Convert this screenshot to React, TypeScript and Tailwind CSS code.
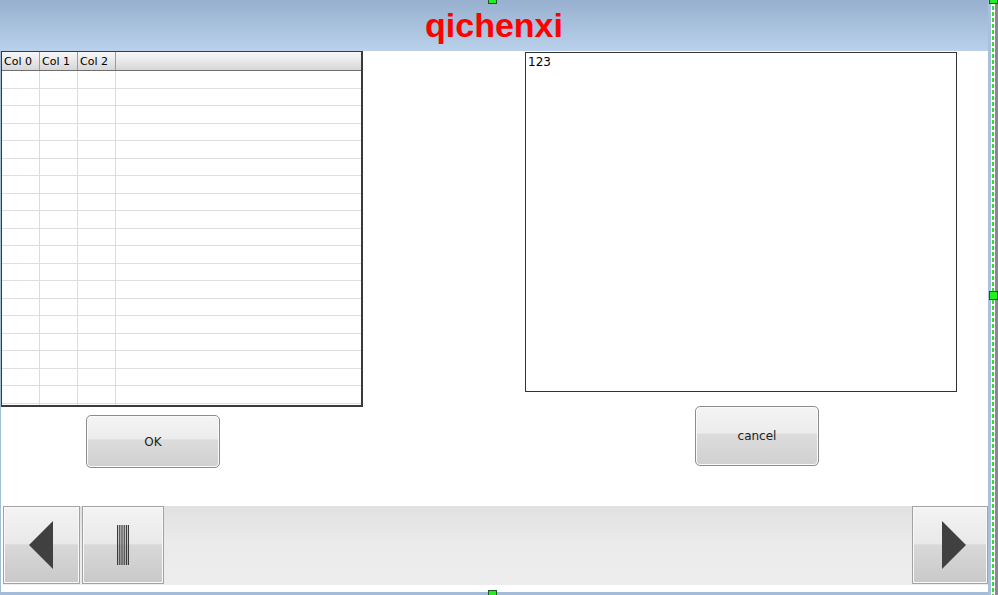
import React from 'react';

const columns = ['Col 0', 'Col 1', 'Col 2'] as const;
const rows = Array.from({ length: 20 }, (_, i) => i);

const uiFont = { fontFamily: '"DejaVu Sans", "Liberation Sans", sans-serif' };

function GridTable() {
  return (
    <div className="h-[356px] w-[362px] overflow-hidden border border-[#3a3a3a] border-r-2 border-b-2 bg-white">
      <div className="flex h-[19px] border-b border-[#6f6f6f] bg-[linear-gradient(to_bottom,#f7f7f7,#e8e8e8_50%,#d6d6d6)]">
        {columns.map((col) => (
          <div
            key={col}
            className="flex w-[38px] items-center border-r border-[#9c9c9c] pl-[2px] text-[11px] leading-none text-black"
            style={uiFont}
          >
            {col}
          </div>
        ))}
        <div className="flex-1" />
      </div>
      {rows.map((r) => (
        <div key={r} className="flex h-[17.5px] border-b border-[#dedede]">
          <div className="w-[38px] border-r border-[#dcdcdc]" />
          <div className="w-[38px] border-r border-[#dcdcdc]" />
          <div className="w-[38px] border-r border-[#dcdcdc]" />
          <div className="flex-1" />
        </div>
      ))}
    </div>
  );
}

function GlossButton({ label, className }: { label: string; className: string }) {
  return (
    <button
      type="button"
      className={`flex items-center justify-center rounded-[5px] border border-[#8c8c8c] bg-[linear-gradient(to_bottom,#f4f4f4,#ececec_45%,#dcdcdc_47%,#d0d0d0)] text-[12px] text-[#222] shadow-[inset_0_0_0_1px_#fafafa] ${className}`}
      style={uiFont}
    >
      {label}
    </button>
  );
}

function NavButton({ children, className }: { children: React.ReactNode; className: string }) {
  return (
    <div
      className={`flex items-center justify-center border border-[#a2a2a2] bg-[linear-gradient(to_bottom,#f3f3f3,#e9e9e9_48%,#d8d8d8_50%,#c9c9c9)] shadow-[inset_0_0_0_1px_#f8f8f8] ${className}`}
    >
      {children}
    </div>
  );
}

export default function App() {
  return (
    <div className="relative flex h-[595px] w-[998px] overflow-hidden bg-white">
      {/* window body */}
      <div className="flex w-[988px] flex-col">
        <div className="flex h-[51px] items-center justify-center bg-[linear-gradient(to_bottom,#97b0cf,#b9d1ea)]">
          <span
            className="pb-[2px] text-[34px] font-bold leading-none text-[#ff0000]"
            style={{ fontFamily: '"Liberation Sans", Arial, sans-serif' }}
          >
            qichenxi
          </span>
        </div>

        <div className="flex flex-1 flex-col border-l border-[#a3bcd9]">
          <div className="flex">
            <div className="flex w-[362px] flex-col">
              <GridTable />
              <GlossButton label="OK" className="ml-[85px] mt-[8px] h-[53px] w-[134px]" />
            </div>

            <div className="ml-[162px] flex flex-col pt-[1px]">
              <div className="h-[340px] w-[432px] border border-[#333] px-[2px] pt-[3px]">
                <div className="text-[12px] leading-none text-black" style={uiFont}>
                  123
                </div>
              </div>
              <GlossButton label="cancel" className="ml-[170px] mt-[14px] h-[60px] w-[124px]" />
            </div>
          </div>

          {/* scroll bar */}
          <div className="mb-[7px] ml-[2px] mt-auto flex h-[79px] bg-[linear-gradient(to_bottom,#e1e1e1,#ebebeb_50%,#ededed)]">
            <NavButton className="h-[78px] w-[77px] pr-[2px]">
              <svg width="26" height="50" viewBox="0 0 26 50">
                <path d="M25 1 L1 25 L25 49 Z" fill="#404040" />
              </svg>
            </NavButton>
            <NavButton className="ml-[2px] h-[78px] w-[82px]">
              <svg width="12" height="40" viewBox="0 0 12 40">
                <rect x="0" y="0" width="1.2" height="40" fill="#3a3a3a" />
                <rect x="2.2" y="0" width="1.2" height="40" fill="#3a3a3a" />
                <rect x="4.4" y="0" width="1.2" height="40" fill="#3a3a3a" />
                <rect x="6.6" y="0" width="1.2" height="40" fill="#3a3a3a" />
                <rect x="8.8" y="0" width="1.2" height="40" fill="#3a3a3a" />
                <rect x="10.8" y="0" width="1.2" height="40" fill="#3a3a3a" />
              </svg>
            </NavButton>
            <div className="flex-1" />
            <NavButton className="h-[78px] w-[76px] pl-[8px]">
              <svg width="26" height="50" viewBox="0 0 26 50">
                <path d="M1 1 L25 25 L1 49 Z" fill="#404040" />
              </svg>
            </NavButton>
          </div>
        </div>

        <div className="h-[3px] bg-[#a3bcd9]" />
      </div>

      {/* right frame edge with selection outline */}
      <div className="flex w-[10px]">
        <div className="w-[3px] bg-[#a8c0dc]" />
        <div className="w-[1px] bg-white" />
        <div className="w-[2px] bg-[repeating-linear-gradient(to_bottom,#36d936_0_4px,#ffffff_4px_6px)]" />
        <div className="w-[1px] bg-white" />
        <div className="w-[3px] bg-[#8a8a8a]" />
      </div>

      {/* selection handles */}
      <div className="absolute left-[488px] top-[-5px] h-[9px] w-[9px] border border-[#1d5a1d] bg-[#22ee22]" />
      <div className="absolute left-[488px] top-[590px] h-[9px] w-[9px] border border-[#1d5a1d] bg-[#22ee22]" />
      <div className="absolute left-[989px] top-[291px] h-[9px] w-[9px] border border-[#1d5a1d] bg-[#22ee22]" />
      <div className="absolute left-[989px] top-[-5px] h-[9px] w-[9px] border border-[#1d5a1d] bg-[#22ee22]" />
    </div>
  );
}
